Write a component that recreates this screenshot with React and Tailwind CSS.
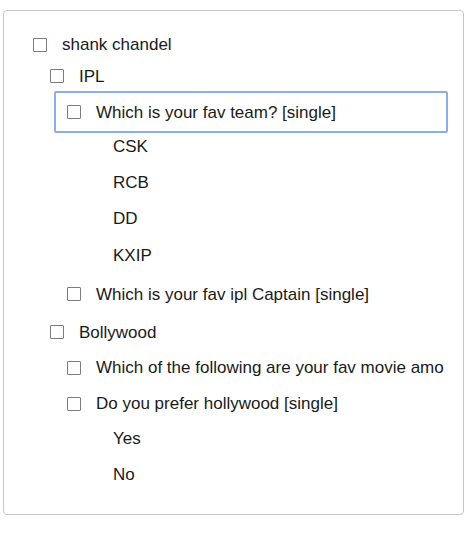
import React from "react";

function Box() {
  return <span className="inline-block w-[14px] h-[14px] border-[1.5px] border-[#7c7c7c] rounded-[1px] bg-white shrink-0" />;
}

function Row({ h, pl, check = true, children }) {
  return (
    <div className={`flex items-center whitespace-nowrap overflow-hidden ${h} ${pl}`}>
      {check && <Box />}
      <span className={check ? "ml-[15px]" : ""}>{children}</span>
    </div>
  );
}

export default function App() {
  return (
    <div className="bg-white w-[474px] h-[533px] pt-[10px] pl-[3px]" style={{ fontFamily: '"Liberation Sans", Arial, sans-serif' }}>
      <div className="w-[461px] h-[505px] border border-[#c8c8c8] rounded-[4px] pt-[17px] pr-[15px] text-[17px] text-[#1a1a1a] leading-none">
        <Row h="h-[33px]" pl="pl-[29px]">shank chandel</Row>
        <Row h="h-[30px]" pl="pl-[46px]">IPL</Row>
        <div className="ml-[50px] h-[42px] border-2 border-[#8aaeec] rounded-[2px] flex items-center pl-[11px] whitespace-nowrap overflow-hidden">
          <Box />
          <span className="ml-[15px]">Which is your fav team? [single]</span>
        </div>
        <Row h="h-[26px]" pl="pl-[109px]" check={false}>CSK</Row>
        <Row h="h-[46px]" pl="pl-[109px]" check={false}>RCB</Row>
        <Row h="h-[26px]" pl="pl-[109px]" check={false}>DD</Row>
        <Row h="h-[48px]" pl="pl-[109px]" check={false}>KXIP</Row>
        <Row h="h-[30px]" pl="pl-[63px]">Which is your fav ipl Captain [single]</Row>
        <Row h="h-[46px]" pl="pl-[46px]">Bollywood</Row>
        <Row h="h-[25px]" pl="pl-[63px]">Which of the following are your fav movie amo</Row>
        <Row h="h-[47px]" pl="pl-[63px]">Do you prefer hollywood [single]</Row>
        <Row h="h-[22px]" pl="pl-[109px]" check={false}>Yes</Row>
        <Row h="h-[50px]" pl="pl-[109px]" check={false}>No</Row>
      </div>
    </div>
  );
}
